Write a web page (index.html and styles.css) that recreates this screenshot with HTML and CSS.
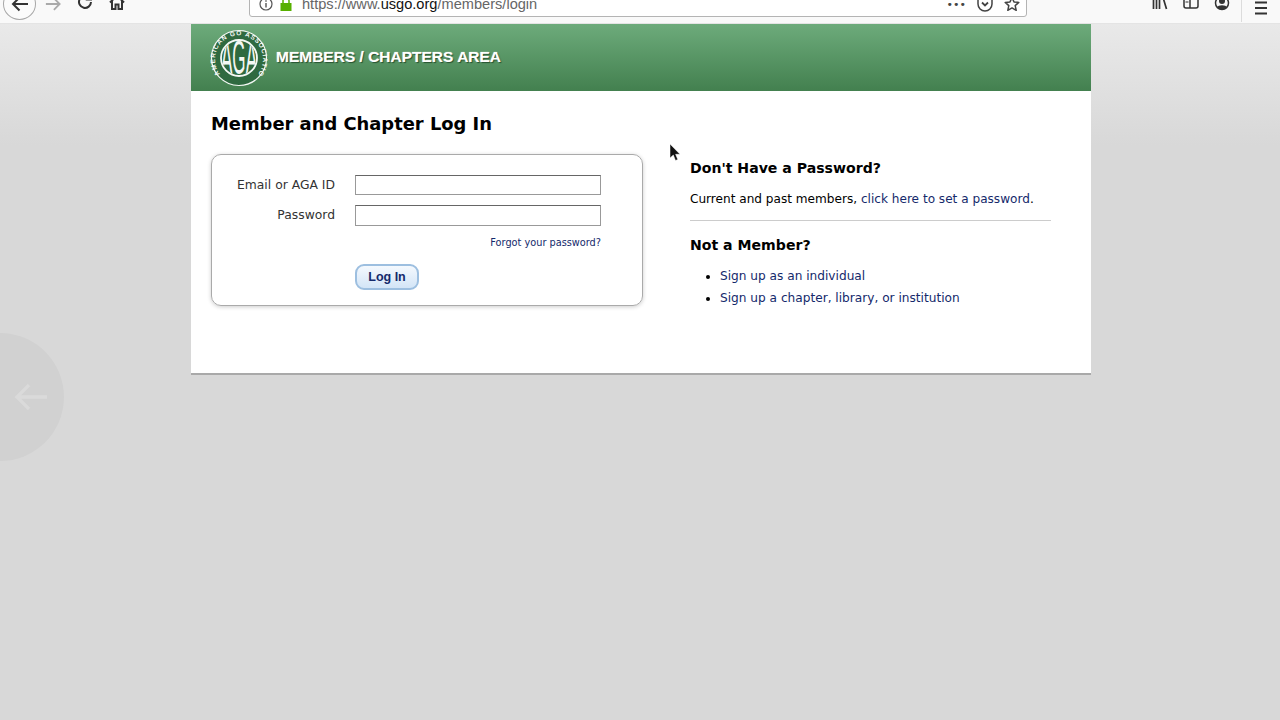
FILE: index.html
```html
<!DOCTYPE html>
<html lang="en">
<head>
    <meta charset="UTF-8">
    <title>Members / Chapters Area</title>
    <link rel="stylesheet" href="styles.css">
</head>
<body>
    <!-- browser toolbar, cut off by the top of the picture -->
    <div class="toolbar">
        <div class="nav-icons">
            <span class="back-btn">
                <svg width="18" height="16" viewBox="0 0 18 16"><path d="M17 8H2M8.500 1.500 2 8l6.500 6.500" fill="none" stroke="#333" stroke-width="2"/></svg>
            </span>
            <svg class="nav-forward" width="16" height="16" viewBox="0 0 18 16"><path d="M1 8h15M10 1.500 16.500 8 10 14.500" fill="none" stroke="#aaa" stroke-width="2"/></svg>
            <svg class="nav-icon" width="16" height="16" viewBox="0 0 16 16"><path d="M14 8A6 6 0 1 1 11.500 3" fill="none" stroke="#333" stroke-width="2"/><path d="M15 0v6.500H8.500z" fill="#333"/></svg>
            <svg class="nav-icon" width="16" height="16" viewBox="0 0 16 16"><path d="M1 8.500 8 1.500l7 7M3 7v8h3.500v-4.500h3V15H13V7" fill="none" stroke="#333" stroke-width="2"/></svg>
        </div>
        <div class="urlbar">
            <svg class="info-icon" width="14" height="14" viewBox="0 0 14 14"><circle cx="7" cy="7" r="6" fill="none" stroke="#555" stroke-width="1.200"/><path d="M7 6v4.500M7 3.200v1.500" stroke="#555" stroke-width="1.400"/></svg>
            <svg class="lock-icon" width="12" height="14" viewBox="0 0 12 14"><path d="M3 6V4a3 3 0 0 1 6 0v2" fill="none" stroke="#57b000" stroke-width="1.500"/><rect x="0.500" y="6" width="11" height="8" fill="#57b000"/></svg>
            <span class="url">https://www.<b>usgo.org</b>/members/login</span>
            <span class="url-dots">•••</span>
            <svg class="url-icon" width="16" height="16" viewBox="0 0 16 16"><path d="M1 2.500h14V8A7 7 0 0 1 1 8z" fill="none" stroke="#444" stroke-width="1.500" stroke-linejoin="round"/><path d="M5 6.500 8 9.500l3-3" fill="none" stroke="#444" stroke-width="1.800"/></svg>
            <svg class="url-icon" width="16" height="16" viewBox="0 0 16 16"><path d="m8 1.500 2 4.400 4.800.5-3.600 3.200 1 4.700L8 11.900l-4.200 2.400 1-4.700L1.200 6.400 6 5.900z" fill="none" stroke="#444" stroke-width="1.500" stroke-linejoin="round"/></svg>
        </div>
        <div class="tool-icons">
            <svg width="16" height="16" viewBox="0 0 16 16"><path d="M1.500 0v15M4.500 0v15M7.500 0v15M10 0l4.500 15" fill="none" stroke="#333" stroke-width="1.700"/></svg>
            <svg width="16" height="16" viewBox="0 0 16 16"><rect x="1" y="0" width="14" height="14" rx="2" fill="none" stroke="#333" stroke-width="1.500"/><path d="M7 0v14" stroke="#333" stroke-width="1.500"/><path d="M2.500 5h3M2.500 8h3" stroke="#333"/></svg>
            <svg class="account-icon" width="16" height="16" viewBox="0 0 16 16"><circle cx="8" cy="8" r="6.500" fill="none" stroke="#333" stroke-width="1.500"/><circle cx="8" cy="6" r="3" fill="#333"/><path d="M3 12.500c1-3 9-3 10 0l-2.500 1.500h-5z" fill="#333"/></svg>
            <span class="tool-sep"></span>
            <svg class="menu-icon" width="16" height="16" viewBox="0 0 16 16"><path d="M2 2.500h12M2 8h12M2 13.500h12" stroke="#333" stroke-width="1.800"/></svg>
        </div>
    </div>

    <div class="wrapper">
        <div class="banner">
            <svg class="logo" width="58" height="58" viewBox="0 0 58 58">
                <defs>
                    <path id="ringText" d="M10 45A24 24 0 1 1 48 45"/>
                    <clipPath id="logoDisc"><circle cx="29" cy="29" r="17"/></clipPath>
                </defs>
                <circle cx="29" cy="29" r="27.500" fill="#2f6a40" stroke="#f4f8f4" stroke-width="1.200"/>
                <text class="logo-ring"><textPath href="#ringText" textLength="112">AMERICAN GO ASSOCIATION</textPath></text>
                <circle cx="29" cy="29" r="18" fill="#2f6a40" stroke="#f4f8f4" stroke-width="1.800"/>
                <g clip-path="url(#logoDisc)">
                    <text class="logo-aga" transform="translate(29 45) scale(1 1.750)" text-anchor="middle" textLength="36" lengthAdjust="spacingAndGlyphs">AGA</text>
                </g>
            </svg>
            <span class="banner-title">MEMBERS / CHAPTERS AREA</span>
        </div>

        <div class="content">
            <div class="login-col">
                <h1>Member and Chapter Log In</h1>
                <form class="login-box">
                    <div class="field">
                        <label for="email">Email or AGA ID</label>
                        <input type="text" id="email">
                    </div>
                    <div class="field field-pass">
                        <label for="password">Password</label>
                        <input type="password" id="password">
                    </div>
                    <div class="forgot"><a href="#">Forgot your password?</a></div>
                    <div class="submit-row"><button type="button">Log In</button></div>
                </form>
            </div>
            <div class="info-col">
                <h3>Don't Have a Password?</h3>
                <p>Current and past members, <a href="#">click here to set a password</a>.</p>
                <hr>
                <h3>Not a Member?</h3>
                <ul>
                    <li><a href="#">Sign up as an individual</a></li>
                    <li><a href="#">Sign up a chapter, library, or institution</a></li>
                </ul>
            </div>
        </div>
    </div>

    <!-- video player's skip-back button and the mouse pointer lie over the page -->
    <div class="skip-back">
        <svg width="36" height="30" viewBox="0 0 36 30"><path d="M34 15H4M16 3 4 15l12 12" fill="none" stroke="#dadada" stroke-width="3.500"/></svg>
    </div>
    <svg class="pointer" width="12" height="18" viewBox="0 0 12 18"><path d="M1 0v14l3.300-3 2.200 5.500 2.300-1-2.200-5.200H11z" fill="#111" stroke="#fff" stroke-width="0.500"/></svg>
</body>
</html>
```

FILE: styles.css
```css
html, body {
    height: 100%;
}
body {
    margin: 0;
    overflow: hidden;
    font-family: "DejaVu Sans", Verdana, sans-serif;
    font-size: 12px;
    color: #000;
    background: #d8d8d8 linear-gradient(#e9e9e9 24px, #d8d8d8 145px) no-repeat;
}
a {
    color: #14296b;
    text-decoration: none;
}

/* toolbar */
.toolbar {
    height: 24px;
    box-sizing: border-box;
    display: flex;
    overflow: hidden;
    background: #f9f9f9;
    border-bottom: 1px solid #e4e4e4;
}
.nav-icons {
    width: 249px;
    height: 32px;
    margin-top: -12px;
    display: flex;
    align-items: center;
    flex: none;
}
.back-btn {
    width: 33px;
    height: 32px;
    box-sizing: border-box;
    margin-left: 3px;
    border: 1px solid #a8a8a8;
    border-radius: 50%;
    background: #fbfbfb;
    display: flex;
    align-items: center;
    justify-content: center;
    flex: none;
}
.nav-forward {
    margin-left: 9px;
}
.nav-icon {
    margin: -4px 0 0 16px;
}
.urlbar {
    width: 778px;
    height: 30px;
    box-sizing: border-box;
    margin-top: -13px;
    padding: 4px 6px 0 9px;
    border: 1px solid #b4b4b4;
    border-radius: 3px;
    background: #fff;
    display: flex;
    align-items: center;
    flex: none;
}
.lock-icon {
    margin-left: 7px;
}
.url {
    margin-left: 10px;
    font-family: "Liberation Sans", Arial, sans-serif;
    font-size: 14.600px;
    color: #666;
}
.url b {
    font-weight: normal;
    color: #111;
}
.url-dots {
    margin-left: auto;
    font-size: 11px;
    color: #444;
}
.url-icon {
    margin-left: 11px;
}
.tool-icons {
    flex: 1;
    height: 32px;
    margin-top: -14px;
    padding-left: 125px;
    display: flex;
    align-items: center;
    gap: 15px;
}
.account-icon {
    margin-top: 2px;
}
.tool-sep {
    width: 1px;
    height: 40px;
    margin: 0 -4px;
    background: #dcdcdc;
}
.menu-icon {
    margin-top: 11px;
}

/* page */
.wrapper {
    width: 900px;
    margin-left: 191px;
    background: #fff;
    border-bottom: 2px solid #a9a9a9;
}
.banner {
    height: 67px;
    display: flex;
    align-items: center;
    padding-left: 19px;
    background: linear-gradient(#6dab7b, #43804f);
}
.logo {
    flex: none;
}
.logo-ring {
    font-family: "Liberation Sans", Arial, sans-serif;
    font-size: 6.500px;
    font-weight: bold;
    fill: #f4f8f4;
}
.logo-aga {
    font-family: "Liberation Sans", Arial, sans-serif;
    font-size: 27px;
    fill: #f4f8f4;
}
.banner-title {
    margin: -2px 0 0 8px;
    font-family: "Liberation Sans", Arial, sans-serif;
    font-size: 15.500px;
    font-weight: bold;
    color: #fff;
    text-shadow: 1px 1px 1px #24502e, 0 0 1px #fff;
}
.content {
    height: 282px;
    display: flex;
}
.login-col {
    width: 432px;
    margin-left: 20px;
    flex: none;
}
h1 {
    margin: 21px 0 18px;
    font-size: 17.900px;
    line-height: 24px;
}
.login-box {
    height: 152px;
    box-sizing: border-box;
    padding-top: 20px;
    border: 1px solid #aaa;
    border-radius: 10px;
    box-shadow: 0 1px 4px rgba(0, 0, 0, 0.2);
}
.field {
    display: flex;
    align-items: center;
    height: 20px;
    margin-bottom: 10px;
}
.field-pass {
    height: 21px;
}
.field label {
    width: 123px;
    text-align: right;
    color: #333;
    font-size: 12.350px;
    flex: none;
}
.field-pass label {
    padding-bottom: 2px;
}
.field input {
    width: 246px;
    height: 100%;
    margin: 0 0 0 20px;
    padding: 0;
    box-sizing: border-box;
    border: 1px solid #999;
    border-top-color: #666;
    background: #fff;
}
.forgot {
    width: 389px;
    margin-top: 11px;
    text-align: right;
    font-size: 9.750px;
    line-height: 12px;
}
.submit-row {
    margin: 15px 0 0 143px;
}
.submit-row button {
    width: 64px;
    height: 26px;
    padding: 0 0 1px;
    border: 2px solid #9dbfe0;
    border-radius: 9px;
    background: linear-gradient(#f4f9fe, #d3e5f7);
    color: #14296b;
    font-family: "Liberation Sans", Arial, sans-serif;
    font-size: 12.500px;
    font-weight: bold;
}
.info-col {
    width: 361px;
    margin-left: 47px;
    padding-top: 67px;
}
h3 {
    margin: 0;
    font-size: 14.100px;
    line-height: 20px;
}
.info-col p {
    margin: 11px 0 0;
    font-size: 12.100px;
    line-height: 20px;
}
hr {
    margin: 11px 0 14px;
    border: none;
    border-top: 1px solid #ccc;
}
.info-col ul {
    margin: 10px 0 0;
    padding: 0 0 0 30px;
    font-size: 12.150px;
    line-height: 22px;
}

/* overlays */
.skip-back {
    position: absolute;
    left: -64px;
    top: 333px;
    width: 128px;
    height: 128px;
    border-radius: 50%;
    background: #d1d1d1;
    display: flex;
    align-items: center;
    justify-content: flex-end;
}
.skip-back svg {
    margin-right: 15px;
}
.pointer {
    position: absolute;
    left: 669px;
    top: 144px;
}
```
